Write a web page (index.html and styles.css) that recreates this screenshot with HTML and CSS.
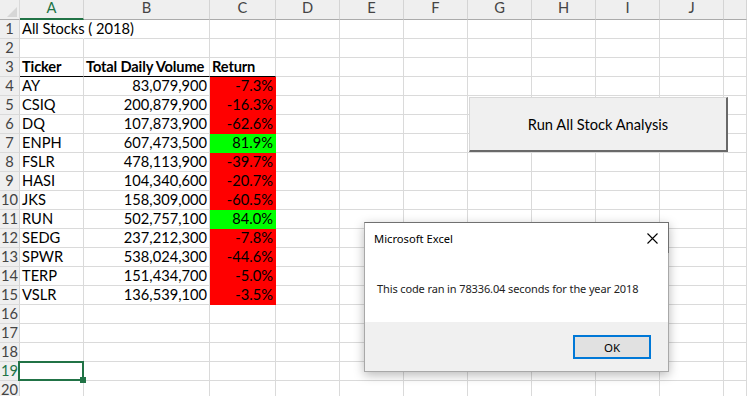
FILE: index.html
```
<!DOCTYPE html>
<html>
<head>
<meta charset="utf-8">
<title>All Stocks (2018)</title>
<link rel="stylesheet" href="styles.css">
</head>
<body>
<div class="sheet">
<div class="corner"></div><div class="ch sel">A</div><div class="ch">B</div><div class="ch">C</div><div class="ch">D</div><div class="ch">E</div><div class="ch">F</div><div class="ch">G</div><div class="ch">H</div><div class="ch">I</div><div class="ch">J</div><div class="ch"></div>
<div class="rh">1</div><div class="c ov">All Stocks ( 2018)</div><div class="c"></div><div class="c"></div><div class="c"></div><div class="c"></div><div class="c"></div><div class="c"></div><div class="c"></div><div class="c"></div><div class="c"></div><div class="c"></div>
<div class="rh">2</div><div class="c"></div><div class="c"></div><div class="c"></div><div class="c"></div><div class="c"></div><div class="c"></div><div class="c"></div><div class="c"></div><div class="c"></div><div class="c"></div><div class="c"></div>
<div class="rh">3</div><div class="c hd">Ticker</div><div class="c hd">Total Daily Volume</div><div class="c hd">Return</div><div class="c"></div><div class="c"></div><div class="c"></div><div class="c"></div><div class="c"></div><div class="c"></div><div class="c"></div><div class="c"></div>
<div class="rh">4</div><div class="c">AY</div><div class="c num">83,079,900</div><div class="c num neg">-7.3%</div><div class="c"></div><div class="c"></div><div class="c"></div><div class="c"></div><div class="c"></div><div class="c"></div><div class="c"></div><div class="c"></div>
<div class="rh">5</div><div class="c">CSIQ</div><div class="c num">200,879,900</div><div class="c num neg">-16.3%</div><div class="c"></div><div class="c"></div><div class="c"></div><div class="c"></div><div class="c"></div><div class="c"></div><div class="c"></div><div class="c"></div>
<div class="rh">6</div><div class="c">DQ</div><div class="c num">107,873,900</div><div class="c num neg">-62.6%</div><div class="c"></div><div class="c"></div><div class="c"></div><div class="c"></div><div class="c"></div><div class="c"></div><div class="c"></div><div class="c"></div>
<div class="rh">7</div><div class="c">ENPH</div><div class="c num">607,473,500</div><div class="c num pos">81.9%</div><div class="c"></div><div class="c"></div><div class="c"></div><div class="c"></div><div class="c"></div><div class="c"></div><div class="c"></div><div class="c"></div>
<div class="rh">8</div><div class="c">FSLR</div><div class="c num">478,113,900</div><div class="c num neg">-39.7%</div><div class="c"></div><div class="c"></div><div class="c"></div><div class="c"></div><div class="c"></div><div class="c"></div><div class="c"></div><div class="c"></div>
<div class="rh">9</div><div class="c">HASI</div><div class="c num">104,340,600</div><div class="c num neg">-20.7%</div><div class="c"></div><div class="c"></div><div class="c"></div><div class="c"></div><div class="c"></div><div class="c"></div><div class="c"></div><div class="c"></div>
<div class="rh">10</div><div class="c">JKS</div><div class="c num">158,309,000</div><div class="c num neg">-60.5%</div><div class="c"></div><div class="c"></div><div class="c"></div><div class="c"></div><div class="c"></div><div class="c"></div><div class="c"></div><div class="c"></div>
<div class="rh">11</div><div class="c">RUN</div><div class="c num">502,757,100</div><div class="c num pos">84.0%</div><div class="c"></div><div class="c"></div><div class="c"></div><div class="c"></div><div class="c"></div><div class="c"></div><div class="c"></div><div class="c"></div>
<div class="rh">12</div><div class="c">SEDG</div><div class="c num">237,212,300</div><div class="c num neg">-7.8%</div><div class="c"></div><div class="c"></div><div class="c"></div><div class="c"></div><div class="c"></div><div class="c"></div><div class="c"></div><div class="c"></div>
<div class="rh">13</div><div class="c">SPWR</div><div class="c num">538,024,300</div><div class="c num neg">-44.6%</div><div class="c"></div><div class="c"></div><div class="c"></div><div class="c"></div><div class="c"></div><div class="c"></div><div class="c"></div><div class="c"></div>
<div class="rh">14</div><div class="c">TERP</div><div class="c num">151,434,700</div><div class="c num neg">-5.0%</div><div class="c"></div><div class="c"></div><div class="c"></div><div class="c"></div><div class="c"></div><div class="c"></div><div class="c"></div><div class="c"></div>
<div class="rh">15</div><div class="c">VSLR</div><div class="c num">136,539,100</div><div class="c num neg">-3.5%</div><div class="c"></div><div class="c"></div><div class="c"></div><div class="c"></div><div class="c"></div><div class="c"></div><div class="c"></div><div class="c"></div>
<div class="rh">16</div><div class="c"></div><div class="c"></div><div class="c"></div><div class="c"></div><div class="c"></div><div class="c"></div><div class="c"></div><div class="c"></div><div class="c"></div><div class="c"></div><div class="c"></div>
<div class="rh">17</div><div class="c"></div><div class="c"></div><div class="c"></div><div class="c"></div><div class="c"></div><div class="c"></div><div class="c"></div><div class="c"></div><div class="c"></div><div class="c"></div><div class="c"></div>
<div class="rh">18</div><div class="c"></div><div class="c"></div><div class="c"></div><div class="c"></div><div class="c"></div><div class="c"></div><div class="c"></div><div class="c"></div><div class="c"></div><div class="c"></div><div class="c"></div>
<div class="rh rsel">19</div><div class="c active"></div><div class="c"></div><div class="c"></div><div class="c"></div><div class="c"></div><div class="c"></div><div class="c"></div><div class="c"></div><div class="c"></div><div class="c"></div><div class="c"></div>
<div class="rh">20</div><div class="c"></div><div class="c"></div><div class="c"></div><div class="c"></div><div class="c"></div><div class="c"></div><div class="c"></div><div class="c"></div><div class="c"></div><div class="c"></div><div class="c"></div>
</div>

<button class="macro-btn">Run All Stock Analysis</button>

<div class="dlg">
  <div class="dlg-title">
    <span>Microsoft Excel</span>
    <svg class="dlg-close" width="11" height="11" viewBox="0 0 11 11"><path d="M0.5 0.5L10.5 10.5M10.5 0.5L0.5 10.5" stroke="#000" stroke-width="1.1" fill="none"/></svg>
  </div>
  <div class="dlg-body">This code ran in 78336.04 seconds for the year 2018</div>
  <div class="dlg-foot"><button class="ok">OK</button></div>
</div>
</body>
</html>
```
FILE: styles.css
```
* { box-sizing: border-box; }
html, body { margin: 0; padding: 0; }
body {
  width: 747px;
  height: 396px;
  overflow: hidden;
  position: relative;
  background: #fff;
  font-family: Lato, "Liberation Sans", sans-serif;
  font-size: 14.67px;
  color: #000;
}
.sheet {
  display: grid;
  grid-template-columns: 20px 64px 126px 66px repeat(7, 64px) 1fr;
  grid-template-rows: 20px;
  grid-auto-rows: 19px;
}
.sheet > div {
  border-right: 1px solid #dadada;
  border-bottom: 1px solid #dadada;
  white-space: nowrap;
  overflow: hidden;
  line-height: 18px;
  padding: 0 2px;
}
.corner {
  background: #efefef;
  position: relative;
  border-bottom-color: #ababab !important;
}
.corner::after {
  content: "";
  position: absolute;
  right: 2px;
  bottom: 2px;
  width: 10px;
  height: 10px;
  background: #d6d6d6;
  clip-path: polygon(100% 0, 100% 100%, 0 100%);
}
.ch {
  background: #efefef;
  border-bottom-color: #ababab !important;
  border-right-color: #d4d4d4 !important;
  color: #444;
  text-align: center;
  line-height: 16px !important;
}
.ch.sel {
  color: #217346;
  border-bottom: 2px solid #217346 !important;
}
.rh {
  background: #efefef;
  color: #444;
  text-align: center;
  padding: 0 !important;
  border-right-color: #d4d4d4 !important;
  border-bottom-color: #dadada;
  overflow: visible !important;
}
.rh.rsel { color: #217346; }
.c.ov { overflow: visible; border-right-color: transparent; }
.c.hd { font-weight: 700; border-bottom-color: #000; overflow: visible; letter-spacing: -0.15px; }
.c.num { text-align: right; }
.c.neg { background: #ff0000; border-color: #ff0000; }
.c.pos { background: #00ff00; border-color: #00ff00; }
.c.active { position: relative; overflow: visible; }
.c.active::after {
  content: "";
  position: absolute;
  left: -2px;
  top: -1px;
  right: -1px;
  bottom: -1px;
  border: 2px solid #217346;
}
.c.active::before {
  content: "";
  position: absolute;
  right: -3px;
  bottom: -3px;
  width: 6px;
  height: 6px;
  background: #217346;
  z-index: 1;
}

.macro-btn {
  position: absolute;
  left: 469px;
  top: 97px;
  width: 259px;
  height: 55px;
  margin: 0;
  padding: 0;
  background: #f0f0f0;
  border-style: solid;
  border-width: 1px 2px 2px 1px;
  border-color: #d8d8d8 #696969 #696969 #d8d8d8;
  font-family: Lato, "Liberation Sans", sans-serif;
  font-size: 14.67px;
  color: #000;
}

.dlg {
  position: absolute;
  left: 364px;
  top: 222px;
  width: 305px;
  height: 150px;
  background: #fff;
  border: 1px solid #a8a8a8;
  border-top-color: #707070;
  box-shadow: 0 3px 10px rgba(0, 0, 0, 0.28);
  display: flex;
  flex-direction: column;
  font-family: "Noto Sans", "Open Sans", sans-serif;
  font-size: 11px;
  color: #000;
}
.dlg::after {
  content: "";
  position: absolute;
  top: -1px;
  right: -1px;
  width: 1px;
  height: 31px;
  background: #707070;
}
.dlg-title {
  height: 30px;
  display: flex;
  justify-content: space-between;
  align-items: flex-start;
  padding: 8px 10px 0 9px;
  line-height: 16px;
  font-size: 11.2px;
}
.dlg-close { margin-top: 2px; }
.dlg-body {
  height: 69px;
  padding: 28px 0 0 12px;
  line-height: 16px;
  white-space: nowrap;
  letter-spacing: -0.12px;
  color: #222;
}
.dlg-foot {
  flex: 1;
  background: #f0f0f0;
  display: flex;
  justify-content: flex-end;
  align-items: flex-start;
  padding: 13px 17px 0 0;
}
.ok {
  width: 78px;
  height: 24px;
  margin: 0;
  padding: 0;
  background: #e1e1e1;
  border: 2px solid #0078d7;
  font-family: "Noto Sans", "Open Sans", sans-serif;
  font-size: 11.5px;
  color: #000;
}
```
